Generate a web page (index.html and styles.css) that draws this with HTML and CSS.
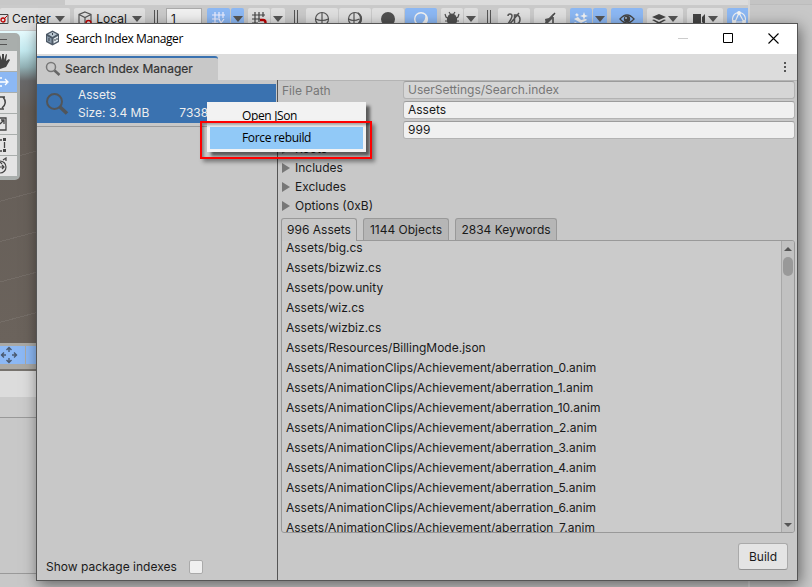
FILE: index.html
```html
<!DOCTYPE html>
<html lang="en">
<head>
  <meta charset="UTF-8" />
  <meta name="viewport" content="width=device-width, initial-scale=1.0" />
  <title>Search Index Manager</title>
  <link rel="stylesheet" href="styles.css">
</head>
<body>

  <div class="editor">
    <div class="main">
      <div class="strip"></div>
      <div class="toolbar">
        <div class="btn center">
          <svg width="12" height="16" viewBox="0 0 12 16"><path d="M0 3.500h8v9H0" fill="none" stroke="#444"/><circle cx="3" cy="9" r="2" fill="none" stroke="#b00" stroke-width="1.300"/><path d="M4.500 7.500l3-3" stroke="#b00"/></svg>
          <span>Center</span><i class="arrow"></i>
        </div>
        <div class="btn local">
          <svg width="16" height="16" viewBox="0 0 16 16" fill="none" stroke="#555" stroke-width="1.200"><path d="M8 1l6 2.500v8L8 15l-6-3V3.500zM2 3.500l6 3 6-3M8 6.500V15"/><circle cx="11.500" cy="12" r="2.500" fill="#dfdfdf" stroke="#b00" stroke-width="1.400"/></svg>
          <span>Local</span><i class="arrow"></i>
        </div>
        <div class="grip"></div>
        <div class="snap-size">1</div>
        <div class="group">
          <div class="btn on w23"><svg width="16" height="16" viewBox="0 0 16 16" fill="none" stroke="#eef" stroke-width="1.200"><path d="M4 1v13M8 1v6M12 1v6M1 4h13M1 8h8M1 12h6M8 8l2 4v4M13 8l-3 4"/></svg></div>
          <div class="btn on w13"><i class="arrow"></i></div>
        </div>
        <div class="group">
          <div class="btn w22"><svg width="16" height="16" viewBox="0 0 16 16" fill="none" stroke="#444" stroke-width="1.200"><path d="M4 1v13M8 1v10M12 1v5M1 4h13M1 8h8M1 12h6"/><path d="M9 9h3a2.500 2.500 0 0 1 0 5H9" stroke="#b00" stroke-width="2.400"/></svg></div>
          <div class="btn w14"><i class="arrow"></i></div>
        </div>
        <div class="grip"></div>
        <div class="group">
          <div class="btn w32"><svg width="16" height="16" viewBox="0 0 16 16" fill="none" stroke="#555" stroke-width="1.200"><circle cx="8" cy="8" r="6.500"/><path d="M8 1.500v13M1.500 8q6.500 3 13 0"/></svg></div>
          <div class="btn w32"><svg width="16" height="16" viewBox="0 0 16 16" fill="none" stroke="#555" stroke-width="1.200"><path d="M11 2q5 5 0 11l-6 1q8 2 9.500-6Q14.500 4 11 2z" fill="#555"/><circle cx="8" cy="8" r="6.500"/><path d="M7 1.500v13M1.500 8q5 3 11 0"/></svg></div>
          <div class="btn w32"><svg width="16" height="16" viewBox="0 0 16 16"><circle cx="8" cy="8" r="7" fill="#505050"/></svg></div>
          <div class="btn on w32"><svg width="16" height="16" viewBox="0 0 16 16"><circle cx="8" cy="8" r="6.300" fill="none" stroke="#f2f2f2" stroke-width="1.400"/><path d="M12 3q2 7-6 11 5 2 8-3 2-5-2-8z" fill="#f2f2f2"/></svg></div>
        </div>
        <div class="group">
          <div class="btn w22"><svg width="16" height="16" viewBox="0 0 16 16" stroke="#505050" stroke-width="1.200"><ellipse cx="8" cy="9" rx="4.500" ry="6" fill="#505050"/><path d="M5 1l2 3M11 1L9 4M1 3l1 3 3 2M15 3l-1 3-3 2M1 10h14M2 15l3-3M14 15l-3-3" fill="none"/></svg></div>
          <div class="btn w14"><i class="arrow"></i></div>
        </div>
        <div class="grip end"></div>
        <div class="btn w32"><svg width="16" height="16" viewBox="0 0 16 16" fill="none" stroke="#555" stroke-width="1.500"><path d="M2 5q0-2 2-2t2 2q0 2-4 8h4M8.500 4v9h2.500q3-1 3-4.500T11 4zM3 14L13 2"/></svg></div>
        <div class="btn w32"><svg width="16" height="16" viewBox="0 0 16 16" fill="none" stroke="#444" stroke-width="1.500"><path d="M3 13L13 2M11 6v8"/><path d="M3 8l4-1 4-4v4L4 14z" fill="#555" stroke="none"/></svg></div>
        <div class="group">
          <div class="btn on w22"><svg width="16" height="16" viewBox="0 0 16 16" fill="#f4f4f4"><path d="M1 8l4-2 3 3 5-1 1 1-6 3zM1 12l1-1 6 3 5-3 1 1-6 4zM11 1l1 3 3 1-3 1-1 3-1-3-3-1 3-1zM4 2l.7 1.300L6 4l-1.300.7L4 6l-.7-1.300L2 4z"/></svg></div>
          <div class="btn on w14"><i class="arrow"></i></div>
        </div>
        <div class="btn on w32"><svg width="16" height="16" viewBox="0 0 16 16"><path d="M1 8q7-8 14 0-7 8-14 0z" fill="none" stroke="#444" stroke-width="1.300"/><circle cx="8" cy="8" r="3.200" fill="#444"/><circle cx="7" cy="7" r="1" fill="#abc"/></svg></div>
        <div class="btn w36"><svg width="14" height="16" viewBox="0 0 14 16"><path d="M0 6l7-3 7 3-7 3zM0 9l2-.5L7 11l5-2.500 2 .5-7 4z" fill="#444"/></svg><i class="arrow"></i></div>
        <div class="btn w36"><svg width="14" height="16" viewBox="0 0 14 16"><path d="M1 3h8v11H1zM10 6l3-3v11l-3-3z" fill="#444"/></svg><i class="arrow"></i></div>
        <div class="btn on w23"><svg width="16" height="16" viewBox="0 0 16 16" fill="none" stroke="#f4f4f4" stroke-width="1.200"><circle cx="8" cy="8" r="6.500"/><path d="M8 2L4 11M8 2l5 9M2 11h12"/><circle cx="8" cy="2" r="1.300" fill="#f4f4f4"/><circle cx="3" cy="11" r="1.300" fill="#f4f4f4"/><circle cx="13" cy="11" r="1.300" fill="#f4f4f4"/></svg></div>
      </div>

      <div class="scene">
        <div class="tools">
          <div class="handle"></div>
          <div class="tool"><svg width="16" height="18" viewBox="0 0 16 18"><path d="M0 3l2 5V2l2 0v6l2-6 1 .5L6 9l3-2 1 1-4 7-6 2z" fill="#444"/></svg></div>
          <div class="tool on"><svg width="16" height="18" viewBox="0 0 16 18" fill="none" stroke="#fff" stroke-width="1.300"><path d="M0 9h7M5 6l3 3-3 3M0 5h2M0 13h2"/></svg></div>
          <div class="tool"><svg width="16" height="18" viewBox="0 0 16 18" fill="none" stroke="#444" stroke-width="1.500"><path d="M3 3q5 6-1 11M0 3h5M0 15h4"/></svg></div>
          <div class="tool"><svg width="16" height="18" viewBox="0 0 16 18" fill="none" stroke="#444" stroke-width="1.300"><path d="M0 3h6v12H0M0 9l4-4M1 5h3v4"/></svg></div>
          <div class="tool"><svg width="16" height="18" viewBox="0 0 16 18" fill="none" stroke="#444" stroke-width="1.300"><path d="M0 4h2M4.500 6v6M0 15h2"/><path d="M3 2h3v3H3zM3 13h3v3H3z" fill="#444" stroke="none"/></svg></div>
          <div class="tool"><svg width="16" height="18" viewBox="0 0 16 18" fill="none" stroke="#444" stroke-width="1.200"><circle cx="0" cy="10" r="6"/><path d="M0 10h4M2 8l2 2-2 2M0 5l2 2M3 3l3-2v3"/></svg></div>
        </div>
      </div>
      <div class="gizmo-bar">
        <div class="gizmo"><svg width="18" height="18" viewBox="0 0 18 18" fill="none" stroke="#4a5a70" stroke-width="1.400"><path d="M9 1v5M9 12v5M1 9h5M12 9h5M6.500 4L9 1.500 11.500 4M6.500 14L9 16.500l2.500-2.500M4 6.500L1.500 9 4 11.500M14 6.500L16.500 9 14 11.500"/></svg></div>
        <div class="gizmo"></div>
      </div>
      <div class="panel-tabs"></div>
      <div class="panel-head"></div>
      <div class="panel-body"></div>
      <div class="panel-foot"></div>
    </div>
    <div class="side"></div>
  </div>

  <div class="window">
    <div class="titlebar">
      <svg width="15" height="16" viewBox="0 0 15 16"><path d="M7.500.5L14 4v8l-6.500 3.500L1 12V4z" fill="#4d5966"/><path d="M7.500 2L12 4.300 7.500 7 3 4.300z" fill="#b9c6d0"/><path d="M2 6l4.500 2.500v5L2 11z" fill="#8999a8"/><path d="M8.500 8.500L13 6v5l-4.500 2.500z" fill="#dde5ea"/><path d="M4 8v3M10 9v2M12 8v2M7.500 3v2" stroke="#39434d"/></svg>
      <span class="title">Search Index Manager</span>
      <div class="controls">
        <svg width="10" height="10"><path d="M0 5.500h10" stroke="#ccc"/></svg>
        <svg width="10" height="10"><path d="M.5.5h9v9h-9z" fill="none" stroke="#000"/></svg>
        <svg width="11" height="11"><path d="M.5.5l10 10M10.500.5l-10 10" stroke="#000" stroke-width="1.100"/></svg>
      </div>
    </div>

    <div class="tabstrip">
      <div class="tab">
        <svg width="16" height="16" viewBox="0 0 16 16"><circle cx="6" cy="6" r="4.500" fill="none" stroke="#777" stroke-width="1.500"/><path d="M9.500 9.500l5 4.500" stroke="#666" stroke-width="2.600"/></svg>
        Search Index Manager
      </div>
      <div class="dots"><i></i><i></i><i></i></div>
    </div>

    <div class="content">
      <div class="left">
        <div class="index-item">
          <svg width="24" height="24" viewBox="0 0 24 24"><circle cx="9.500" cy="9.500" r="7.500" fill="none" stroke="#515559" stroke-width="2"/><path d="M15 15l7 6.500" stroke="#515559" stroke-width="3.600"/></svg>
          <div class="info">
            <div>Assets</div>
            <div class="stats"><span>Size: 3.4 MB</span><span>7338</span></div>
          </div>
        </div>
        <div class="left-foot">Show package indexes <span class="checkbox"></span></div>
      </div>

      <div class="right">
        <div class="field off"><label>File Path</label><div class="input">UserSettings/Search.index</div></div>
        <div class="field"><label></label><div class="input">Assets</div></div>
        <div class="field"><label></label><div class="input">999</div></div>
        <div class="foldouts">
          <div class="foldout">Roots</div>
          <div class="foldout">Includes</div>
          <div class="foldout">Excludes</div>
          <div class="foldout">Options (0xB)</div>
        </div>
        <div class="subtabs">
          <div class="subtab active">996 Assets</div>
          <div class="subtab objects">1144 Objects</div>
          <div class="subtab keywords">2834 Keywords</div>
        </div>
        <div class="list">
          <div class="rows">
            <div>Assets/big.cs</div>
            <div>Assets/bizwiz.cs</div>
            <div>Assets/pow.unity</div>
            <div>Assets/wiz.cs</div>
            <div>Assets/wizbiz.cs</div>
            <div>Assets/Resources/BillingMode.json</div>
            <div>Assets/AnimationClips/Achievement/aberration_0.anim</div>
            <div>Assets/AnimationClips/Achievement/aberration_1.anim</div>
            <div>Assets/AnimationClips/Achievement/aberration_10.anim</div>
            <div>Assets/AnimationClips/Achievement/aberration_2.anim</div>
            <div>Assets/AnimationClips/Achievement/aberration_3.anim</div>
            <div>Assets/AnimationClips/Achievement/aberration_4.anim</div>
            <div>Assets/AnimationClips/Achievement/aberration_5.anim</div>
            <div>Assets/AnimationClips/Achievement/aberration_6.anim</div>
            <div>Assets/AnimationClips/Achievement/aberration_7.anim</div>
          </div>
          <div class="scrollbar"><i class="up"></i><div class="thumb"></div><i class="down"></i></div>
        </div>
        <div class="actions"><button class="build">Build</button></div>
      </div>
    </div>
  </div>

  <div class="menu">
    <div class="menu-item">Open JSon</div>
    <div class="menu-item hover">Force rebuild</div>
  </div>
  <div class="highlight"></div>

</body>
</html>
```
FILE: styles.css
```css
* {
  box-sizing: border-box;
}
body {
  margin: 0;
  width: 812px;
  height: 587px;
  overflow: hidden;
  position: relative;
  font-family: Inter, "Liberation Sans", sans-serif;
  font-size: 12px;
  color: #1a1a1a;
}
svg {
  display: block;
  flex: none;
}

/* editor behind the window */
.editor {
  display: flex;
  height: 587px;
  background: #c8c8c8;
}
.main {
  width: 750px;
  display: flex;
  flex-direction: column;
  border-right: 2px solid #d6d6d6;
}
.side {
  flex: 1;
  background: linear-gradient(#c4c4c4 4px, #bcbcbc 4px, #bcbcbc 5px, #c8c8c8 5px);
}
.strip {
  height: 5px;
  margin-left: 65px;
  background: #dcdcdc;
}
.toolbar {
  height: 26px;
  padding-top: 3px;
  display: flex;
  gap: 4px;
  background: #cacaca;
  overflow: hidden;
}
.group {
  display: flex;
  gap: 1px;
}
.btn {
  height: 22px;
  display: flex;
  align-items: center;
  justify-content: center;
  gap: 3px;
  flex: none;
  padding-bottom: 1px;
  background: #dfdfdf;
  border-radius: 2px 2px 0 0;
}
.on {
  background: #8cb8f4;
}
.center {
  width: 70px;
  justify-content: flex-start;
  gap: 0;
  letter-spacing: 0.1px;
}
.center .arrow {
  margin-left: 4px;
}
.local .arrow {
  margin-left: 2px;
}
.local {
  width: 71px;
}
.w13 { width: 13px; }
.w14 { width: 14px; }
.w22 { width: 22px; }
.w23 { width: 23px; }
.w32 { width: 32px; }
.w36 { width: 36px; gap: 2px; }
.arrow {
  border: 5px solid transparent;
  border-top: 6px solid #555;
  border-bottom: 0;
}
.grip {
  width: 4px;
  height: 16px;
  flex: none;
  margin: 2px 4px 0 5px;
  border: solid #555;
  border-width: 0 1px;
}
.grip.end {
  margin-right: 3px;
}
.snap-size {
  width: 36px;
  flex: none;
  margin-right: 1px;
  padding: 2px 4px;
  background: #f0f0f0;
  border: 1px solid #aaa;
}
.scene {
  height: 312px;
  padding-top: 2px;
  background:
    repeating-linear-gradient(165deg, transparent 0 38px, rgba(255, 255, 255, 0.07) 38px 39px) 0 90px no-repeat,
    linear-gradient(#e6fbfe, #c3e9ef 20px, #93b2b6 36px, #69696a 50px, #655e58 80px, #6b635c);
}
.tools {
  width: 20px;
  height: 147px;
  background: #a9aeac;
  border-radius: 0 5px 5px 0;
}
.handle {
  height: 18px;
  padding-top: 6px;
}
.handle::before {
  content: "";
  display: block;
  width: 7px;
  height: 4px;
  border: solid #555;
  border-width: 1px 0;
}
.tool {
  width: 17px;
  height: 20px;
  margin-bottom: 1px;
  padding-top: 1px;
  background: #e4e4e4;
}
.tool.on {
  background: #8cb8f4;
}
.gizmo-bar {
  height: 28px;
  padding: 3px 0 5px;
  display: flex;
  gap: 1px;
  background: #aaa9a5;
  border-bottom: 2px solid #77736e;
}
.gizmo {
  width: 25px;
  background: #8cb8f4;
}
.panel-tabs {
  height: 26px;
  background: #dcdcdc;
}
.panel-head {
  height: 21px;
  background: #cbcbcb;
  border-bottom: 1px solid #999;
}
.panel-body {
  height: 156px;
  border-bottom: 1px solid #999;
}
.panel-foot {
  flex: 1;
}

/* search index window */
.window {
  position: absolute;
  left: 36px;
  top: 23px;
  width: 762px;
  height: 558px;
  display: flex;
  flex-direction: column;
  background: #c8c8c8;
  border: 1px solid #555;
  box-shadow: 2px 4px 14px rgba(0, 0, 0, 0.5);
}
.titlebar {
  height: 30px;
  padding: 0 18px 2px 8px;
  display: flex;
  align-items: center;
  background: #fff;
  color: #000;
}
.title {
  margin-left: 6px;
  font: 12px "Open Sans", "Noto Sans", sans-serif;
  letter-spacing: -0.4px;
}
.controls {
  margin-left: auto;
  display: flex;
  align-items: center;
  gap: 35px;
}
.tabstrip {
  height: 26px;
  padding-top: 2px;
  display: flex;
  justify-content: space-between;
  background: #dcdcdc;
}
.tab {
  width: 181px;
  display: flex;
  align-items: center;
  gap: 4px;
  padding: 0 0 1px 8px;
  background: #c8c8c8;
  border-top: 2px solid #3a72b0;
  border-top-right-radius: 3px;
  color: #333;
  -webkit-text-stroke: 0.2px #333;
}
.dots {
  padding: 6px 11px 0 0;
  display: flex;
  flex-direction: column;
  gap: 2px;
}
.dots i {
  width: 2px;
  height: 2px;
  background: #555;
}
.content {
  flex: 1;
  display: flex;
}
.left {
  width: 241px;
  padding-top: 4px;
  display: flex;
  flex-direction: column;
  border-right: 1px solid #555;
}
.index-item {
  height: 39px;
  margin-right: 1px;
  padding: 2px 0 0 8px;
  display: flex;
  gap: 9px;
  background: #3a72b0;
  color: #eee;
  line-height: 18px;
  box-shadow: 0 3px #c8c8c8, 0 4px #999;
}
.index-item svg {
  margin-top: 6px;
}
.stats {
  display: flex;
  gap: 30px;
}
.left-foot {
  margin: auto 0 6px 9px;
  display: flex;
  align-items: center;
}
.checkbox {
  width: 14px;
  height: 14px;
  margin-left: 12px;
  background: #f0f0f0;
  border: 1px solid #aaa;
  border-radius: 2px;
}
.right {
  flex: 1;
  display: flex;
  flex-direction: column;
  padding: 0 2px 0 3px;
  border-top: 1px solid #b4b4b4;
}
.field {
  height: 18px;
  margin-bottom: 2px;
  display: flex;
}
.field label {
  width: 122px;
  padding: 2px 0 0 1px;
}
.input {
  flex: 1;
  padding-left: 4px;
  line-height: 16px;
  background: #f0f0f0;
  border: 1px solid #b3b3b3;
  border-top-color: #9c9c9c;
  border-radius: 3px;
}
.off {
  color: #777;
}
.off .input {
  background: #d6d6d6;
}
.foldouts {
  margin: -2px 0 3px;
}
.foldout {
  height: 19px;
  line-height: 19px;
  display: flex;
  align-items: center;
}
.foldout::before {
  content: "";
  margin: 1px 5px 0 1px;
  border: 5px solid transparent;
  border-left: 8px solid #777;
  border-right: 0;
}
.subtabs {
  height: 22px;
  display: flex;
  gap: 6px;
}
.subtab {
  height: 22px;
  line-height: 21px;
  text-align: center;
  background: #b6b6b6;
  border: 1px solid #999;
  border-bottom: 0;
  border-radius: 3px 3px 0 0;
}
.subtab.active {
  width: 76px;
  height: 23px;
  background: #c8c8c8;
  z-index: 1;
}
.objects { width: 86px; }
.keywords { width: 102px; }
.list {
  height: 293px;
  display: flex;
  background: #cbcbcb;
  border: 1px solid #999;
  border-radius: 0 3px 3px 3px;
  overflow: hidden;
}
.rows {
  flex: 1;
  height: 294px;
  overflow: hidden;
  margin-top: -3px;
  padding-left: 4px;
  line-height: 20px;
}
.scrollbar {
  width: 13px;
  padding: 6px 0 5px;
  display: flex;
  flex-direction: column;
  align-items: center;
  background: #c1c1c1;
  border-left: 1px solid #a8a8a8;
}
.up, .down {
  border: 4px solid transparent;
}
.up {
  border-top: 0;
  border-bottom-color: #555;
}
.down {
  margin-top: auto;
  border-bottom: 0;
  border-top-color: #555;
}
.thumb {
  width: 10px;
  height: 19px;
  margin-top: 6px;
  background: #999;
  border-radius: 5px;
}
.actions {
  display: flex;
  justify-content: flex-end;
  padding: 10px 7px 0 0;
}
.build {
  width: 50px;
  height: 27px;
  padding: 0;
  font: 12px Inter, sans-serif;
  color: #1a1a1a;
  background: #e4e4e4;
  border: 1px solid #aaa;
  border-bottom-color: #939393;
  border-radius: 3px;
}

/* context menu and its marker */
.menu {
  position: absolute;
  left: 207px;
  top: 102px;
  width: 159px;
  height: 50px;
  padding: 3px;
  background: #f2f2f2;
  box-shadow: 4px 4px 3px rgba(0, 0, 0, 0.55);
  font: 12px "Open Sans", "Noto Sans", sans-serif;
  letter-spacing: -0.35px;
  color: #000;
}
.menu-item {
  height: 22px;
  line-height: 22px;
  padding-left: 32px;
}
.menu-item.hover {
  background: #91c9f7;
}
.highlight {
  position: absolute;
  left: 200px;
  top: 121px;
  width: 172px;
  height: 38px;
  border: 2px solid #f00;
  box-shadow: 3px 3px 4px rgba(0, 0, 0, 0.4), inset 2px 2px 3px rgba(0, 0, 0, 0.35);
}
```
